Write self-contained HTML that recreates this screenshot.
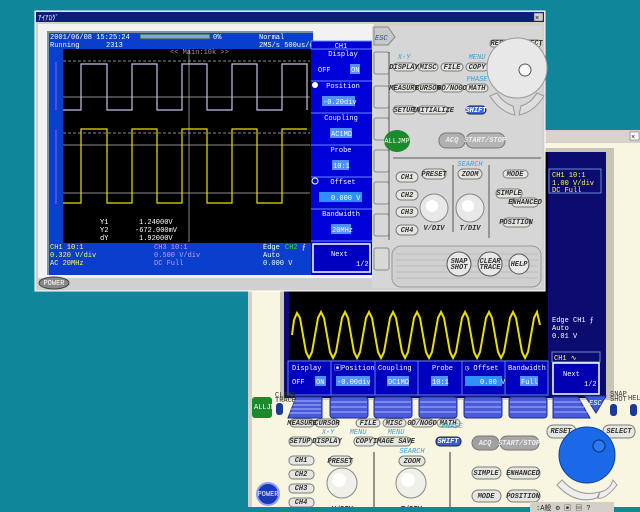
<!DOCTYPE html>
<html><head><meta charset="utf-8"><style>
html,body{margin:0;padding:0;width:640px;height:512px;overflow:hidden;background:#10869a}
svg{display:block}
text{font-family:"Liberation Mono","Noto Sans CJK JP",monospace;font-size:7px}
.b{fill:#e6e6e0;stroke:#7a7a7a;stroke-width:1}
.bt{font-size:4.3px;font-weight:bold;fill:#333;text-anchor:middle;font-style:italic}
.w{fill:#fff}
.mt{fill:#fff;text-anchor:middle;font-size:7px}
</style></head><body>
<svg width="640" height="512" viewBox="0 0 640 512">
<!-- ===== Window 2 (back) ===== -->
<rect x="248" y="130" width="392" height="382" fill="#d4d0c8"/>
<rect x="249" y="131" width="391" height="10" fill="#d8d4cc"/>
<rect x="630" y="132" width="9" height="8" fill="#fff" stroke="#555" stroke-width=".5"/>
<text x="631" y="139" font-size="7">×</text>
<rect x="252" y="143" width="388" height="369" fill="#f8f5e0"/>
<rect x="280" y="148" width="334" height="252" fill="#c8c4b8"/>
<rect x="284" y="152" width="322" height="246" fill="#0c0c70"/>
<rect x="289" y="152" width="259" height="208" fill="#000"/>
<polyline fill="none" stroke="#e8e000" stroke-width="2" points="
292,335 294,320 297,313 300,318 303,335 306,352 309,358 312,352 315,335 318,318 321,312 324,318 327,335 330,352 333,358 336,352 339,335 342,318 345,312 348,318 351,335 354,352 357,358 360,352 363,335 366,318 369,312 372,318 375,335 378,352 381,358 384,352 387,335 390,318 393,312 396,318 399,335 402,352 405,358 408,352 411,335 414,318 417,312 420,318 423,335 426,352 429,358 432,352 435,335 438,318 441,312 444,318 447,335 450,352 453,358 456,352 459,335 462,318 465,312 468,318 471,335 474,352 477,358 480,352 483,335 486,318 489,312 492,318 495,335 498,352 501,358 504,352 507,335 510,318 513,312 516,318 519,335 522,352 525,358 528,352 531,335 534,318 537,312 540,325"/>
<rect x="549" y="169" width="52" height="24" fill="none" stroke="#6a8ad0" stroke-width="1"/>
<text x="552" y="177" fill="#ffff40">CH1 10:1</text>
<text x="552" y="185" fill="#ffff40">1.00 V/div</text>
<text x="552" y="192" fill="#ffff40">DC   Full</text>
<text x="552" y="322" fill="#fff">Edge CH1 ⨍</text>
<text x="552" y="330" fill="#fff">Auto</text>
<text x="552" y="338" fill="#fff">0.01 V</text>
<rect x="552" y="352" width="48" height="10" fill="none" stroke="#6a8ad0"/>
<text x="554" y="360" fill="#ffff40">CH1 ∿</text>
<rect x="553" y="363" width="46" height="31" fill="#0000b0" stroke="#fff" stroke-width="1.5"/>
<text x="563" y="376" fill="#fff">Next</text><text x="584" y="386" fill="#fff">1/2</text>
<!-- menu row -->
<g fill="#0000c0" stroke="#6080e0" stroke-width="1">
<rect x="288" y="361" width="43" height="34"/><rect x="331" y="361" width="44" height="34"/><rect x="375" y="361" width="43" height="34"/>
<rect x="418" y="361" width="44" height="34"/><rect x="462" y="361" width="43" height="34"/><rect x="505" y="361" width="43" height="34"/>
</g>
<g class="w">
<text x="292" y="370">Display</text><text x="334" y="370">▣Position</text><text x="378" y="370">Coupling</text>
<text x="432" y="370">Probe</text><text x="465" y="370">◷ Offset</text><text x="508" y="370">Bandwidth</text>
<text x="292" y="384">OFF</text>
</g>
<rect x="315" y="376" width="11" height="10" fill="#5090ff"/><text x="316" y="384" fill="#fff">ON</text>
<rect x="336" y="376" width="34" height="10" fill="#5090ff"/><text x="337" y="384" fill="#fff">-0.00div</text>
<rect x="387" y="376" width="22" height="10" fill="#5090ff"/><text x="388" y="384" fill="#fff">DC1MΩ</text>
<rect x="431" y="376" width="17" height="10" fill="#5090ff"/><text x="432" y="384" fill="#fff">10:1</text>
<rect x="465" y="376" width="37" height="10" fill="#3090ff"/><text x="480" y="384" fill="#fff">0.00 V</text>
<rect x="520" y="376" width="18" height="10" fill="#5090ff"/><text x="521" y="384" fill="#fff">Full</text>
<!-- blue soft buttons -->
<g fill="#4a5ad8" stroke="#20308a">
<polygon points="296,397 322,397 322,418 288,418"/>
<rect x="330" y="397" width="38" height="21" rx="3"/><rect x="374" y="397" width="38" height="21" rx="3"/>
<rect x="419" y="397" width="38" height="21" rx="3"/><rect x="464" y="397" width="38" height="21" rx="3"/>
<rect x="509" y="397" width="38" height="21" rx="3"/>
<polygon points="553,397 578,397 590,418 553,418"/>
<polygon points="585,396 606,396 596,413" fill="#3a5ad8"/>
</g>
<g stroke="#a8b8ff" stroke-width="1">
<line x1="294" y1="401" x2="321" y2="401"/><line x1="292" y1="405" x2="321" y2="405"/><line x1="290" y1="409" x2="321" y2="409"/><line x1="289" y1="413" x2="321" y2="413"/>
<line x1="331" y1="402" x2="367" y2="402"/><line x1="331" y1="407" x2="367" y2="407"/><line x1="331" y1="412" x2="367" y2="412"/>
<line x1="375" y1="402" x2="411" y2="402"/><line x1="375" y1="407" x2="411" y2="407"/><line x1="375" y1="412" x2="411" y2="412"/>
<line x1="420" y1="402" x2="456" y2="402"/><line x1="420" y1="407" x2="456" y2="407"/><line x1="420" y1="412" x2="456" y2="412"/>
<line x1="465" y1="402" x2="501" y2="402"/><line x1="465" y1="407" x2="501" y2="407"/><line x1="465" y1="412" x2="501" y2="412"/>
<line x1="510" y1="402" x2="546" y2="402"/><line x1="510" y1="407" x2="546" y2="407"/><line x1="510" y1="412" x2="546" y2="412"/>
<line x1="554" y1="402" x2="581" y2="402"/><line x1="554" y1="407" x2="584" y2="407"/><line x1="554" y1="412" x2="587" y2="412"/>
</g>
<text x="589" y="405" fill="#fff" font-size="7" font-style="italic">ESC</text>
<rect x="252" y="397" width="20" height="21" rx="3" fill="#1a8a2a"/><text x="254" y="409" fill="#fff" font-size="3.5">ALLJMP</text>
<text x="275" y="397" font-size="4" fill="#333">CLEAR</text><text x="275" y="402" font-size="4" fill="#333">TRACE</text>
<rect x="276" y="403" width="7" height="12" rx="3" fill="#1a3a9a"/>
<text x="610" y="396" font-size="4" fill="#333">SNAP</text><text x="610" y="401" font-size="4" fill="#333">SHOT</text>
<rect x="610" y="404" width="7" height="12" rx="3" fill="#1a3a9a"/>
<text x="628" y="400" font-size="4" fill="#333">HELP</text>
<rect x="630" y="404" width="7" height="12" rx="3" fill="#1a3a9a"/>
<!-- lower controls -->
<g class="b">
<rect x="290" y="419" width="24" height="8" rx="4"/><rect x="315" y="419" width="24" height="8" rx="4"/>
<rect x="356" y="419" width="24" height="8" rx="4"/><rect x="383" y="419" width="23" height="8" rx="4"/>
<rect x="411" y="419" width="23" height="8" rx="4"/><rect x="437" y="419" width="23" height="8" rx="4"/>
<rect x="289" y="437" width="23" height="9" rx="4"/><rect x="315" y="437" width="25" height="9" rx="4"/>
<rect x="354" y="437" width="21" height="9" rx="4"/><rect x="377" y="437" width="34" height="9" rx="4"/>
<rect x="547" y="425" width="29" height="13" rx="6"/><rect x="603" y="425" width="32" height="13" rx="6"/>
<rect x="289" y="456" width="25" height="9" rx="4"/><rect x="289" y="470" width="25" height="9" rx="4"/>
<rect x="289" y="484" width="25" height="9" rx="4"/><rect x="289" y="498" width="25" height="9" rx="4"/>
<rect x="329" y="456" width="23" height="10" rx="5"/><rect x="399" y="456" width="26" height="10" rx="5"/>
<rect x="472" y="467" width="29" height="12" rx="6"/><rect x="507" y="467" width="33" height="12" rx="6"/>
<rect x="472" y="490" width="29" height="12" rx="6"/><rect x="507" y="490" width="33" height="12" rx="6"/>
</g>
<rect x="472" y="436" width="27" height="14" rx="7" fill="#a0a0a0" stroke="#777"/>
<rect x="500" y="436" width="39" height="14" rx="7" fill="#a8a8a8" stroke="#777"/>
<rect x="436" y="437" width="25" height="9" rx="4" fill="#3a5ad8" stroke="#223"/>
<g class="bt">
<text x="302" y="425">MEASURE</text><text x="327" y="425">CURSOR</text><text x="368" y="425">FILE</text><text x="394" y="425">MISC</text><text x="422" y="425">GO/NOGO</text><text x="448" y="425">MATH</text>
<text x="300" y="443">SETUP</text><text x="327" y="443">DISPLAY</text><text x="364" y="443">COPY</text><text x="394" y="443">IMAGE SAVE</text>
<text x="561" y="433">RESET</text><text x="619" y="433">SELECT</text>
<text x="301" y="462">CH1</text><text x="301" y="476">CH2</text><text x="301" y="490">CH3</text><text x="301" y="504">CH4</text>
<text x="340" y="463">PRESET</text><text x="412" y="463">ZOOM</text>
<text x="486" y="475">SIMPLE</text><text x="523" y="475">ENHANCED</text><text x="486" y="498">MODE</text><text x="523" y="498">POSITION</text>
<text x="485" y="445" fill="#eee">ACQ</text><text x="519" y="445" fill="#eee">START/STOP</text>
<text x="448" y="443" fill="#fff">SHIFT</text>
<text x="342" y="511">V/DIV</text><text x="411" y="511">T/DIV</text>
</g>
<g font-size="5" fill="#3aa0e0" font-style="italic" text-anchor="middle">
<text x="328" y="434">X-Y</text><text x="358" y="434">MENU</text><text x="396" y="434">MENU</text><text x="452" y="428">PHASE</text><text x="412" y="453">SEARCH</text>
</g>
<line x1="374" y1="452" x2="374" y2="508" stroke="#333"/><line x1="450" y1="452" x2="450" y2="508" stroke="#333"/>
<circle cx="342" cy="483" r="15" fill="#f0f0e8" stroke="#888"/><circle cx="339" cy="480" r="7" fill="#fff"/>
<circle cx="411" cy="483" r="15" fill="#f0f0e8" stroke="#888"/><circle cx="408" cy="480" r="7" fill="#fff"/>
<circle cx="587" cy="455" r="28" fill="#1a6ae8" stroke="#1040a0"/><circle cx="599" cy="446" r="6" fill="#2a7af0" stroke="#0a2a70"/>
<path d="M557 485 Q575 505 597 498 L600 492 Q578 498 562 480Z" fill="#eee" stroke="#999"/>
<path d="M617 485 Q605 500 598 498 L600 492 Q610 490 613 480Z" fill="#eee" stroke="#999"/>
<circle cx="268" cy="494" r="11" fill="#1a3ab8" stroke="#8aa0ff" stroke-width="2"/>
<text x="268" y="496" font-size="4" fill="#fff" text-anchor="middle">POWER</text>
<rect x="530" y="502" width="84" height="10" fill="#d4d0c8"/>
<text x="536" y="510" font-size="7" fill="#222">:A般 ⚙ ▣ ▤ ?</text>
<rect x="248" y="507" width="282" height="5" fill="#10869a"/>
<rect x="614" y="507" width="26" height="5" fill="#10869a"/>

<!-- ===== Window 1 (front) ===== -->
<rect x="35" y="11" width="510" height="280" fill="#d4d0c8" stroke="#fff" stroke-width="1"/>
<rect x="36" y="12" width="508" height="10" fill="#0a1e7a"/>
<text x="38" y="20" fill="#fff" font-size="7">ｱｲｱﾛｸﾞ</text>
<rect x="534" y="13" width="9" height="8" fill="#d4d0c8" stroke="#444" stroke-width=".5"/>
<text x="535" y="20" font-size="7">×</text>
<rect x="38" y="24" width="336" height="254" fill="#f2f2f2"/>
<rect x="38" y="278" width="506" height="12" fill="#d0d0d0"/>
<ellipse cx="54" cy="283" rx="15" ry="6" fill="#888" stroke="#444"/><text x="54" y="285" font-size="4" fill="#fff" text-anchor="middle">POWER</text>
<rect x="47" y="31" width="266" height="244" fill="#0a3ecc"/>
<rect x="47" y="31" width="266" height="2" fill="#8090a0"/>
<rect x="47" y="31" width="2" height="244" fill="#8090a0"/>
<text x="50" y="39" fill="#fff">2001/06/08 15:25:24</text>
<text x="50" y="47" fill="#fff">Running</text><text x="106" y="47" fill="#fff">2313</text>
<rect x="140" y="34" width="70" height="5" fill="#8aa0e0" stroke="#1a6a1a"/>
<text x="213" y="39" fill="#fff" font-size="5">0%</text>
<text x="259" y="39" fill="#fff">Normal</text>
<text x="259" y="47" fill="#fff" font-size="6.5">2MS/s 500us/div</text>
<rect x="63" y="49" width="249" height="194" fill="#000"/>
<text x="170" y="54" fill="#999" font-size="4">&lt;&lt; Main:10k &gt;&gt;</text>
<g stroke="#bbb" stroke-width=".7">
<line x1="63" y1="61" x2="310" y2="61" stroke-dasharray="3,2"/><line x1="63" y1="133" x2="310" y2="133" stroke-dasharray="3,2"/>
<line x1="63" y1="97" x2="310" y2="97"/><line x1="63" y1="145" x2="310" y2="145"/><line x1="63" y1="193" x2="310" y2="193"/>
<line x1="189" y1="49" x2="189" y2="242"/>
</g>
<polyline fill="none" stroke="#c8c0e8" stroke-width="1.2" points="63,110 81,110 81,64 107,64 107,110 132,110 132,64 157,64 157,110 182,110 182,64 207,64 207,110 232,110 232,64 257,64 257,110 282,110 282,64 307,64 307,110"/>
<polyline fill="none" stroke="#e8e000" stroke-width="1.2" points="63,203 81,203 81,129 107,129 107,203 132,203 132,129 157,129 157,203 182,203 182,129 207,129 207,203 232,203 232,129 257,129 257,203 282,203 282,129 307,129"/>
<line x1="56" y1="62" x2="56" y2="110" stroke="#8a6ad8" stroke-width="1"/>
<line x1="56" y1="130" x2="56" y2="204" stroke="#8a6ad8" stroke-width="1"/>
<text x="100" y="224" fill="#fff">Y1</text><text x="139" y="224" fill="#fff">1.24000V</text>
<text x="100" y="232" fill="#fff">Y2</text><text x="135" y="232" fill="#fff">-672.000mV</text>
<text x="100" y="240" fill="#fff">dY</text><text x="139" y="240" fill="#fff">1.92000V</text>
<text x="50" y="249" fill="#ffff60">CH1 10:1</text><text x="50" y="257" fill="#ffff60">0.320 V/div</text><text x="50" y="265" fill="#ffff60">AC   20MHz</text>
<text x="154" y="249" fill="#c0a0ff">CH3 10:1</text><text x="154" y="257" fill="#c0a0ff">0.500 V/div</text><text x="154" y="265" fill="#c0a0ff">DC   Full</text>
<text x="263" y="249" fill="#fff">Edge</text><text x="285" y="249" fill="#40e040">CH2</text><text x="302" y="249" fill="#fff">⨍</text>
<text x="263" y="257" fill="#fff">Auto</text><text x="263" y="265" fill="#fff">0.000 V</text>
<!-- right menu -->
<rect x="311" y="41" width="61" height="234" fill="#0000d8"/>
<g stroke="#6a8aff" fill="none"><rect x="311" y="41" width="61" height="8"/>
<line x1="311" y1="81" x2="372" y2="81"/><line x1="311" y1="113" x2="372" y2="113"/><line x1="311" y1="145" x2="372" y2="145"/>
<line x1="311" y1="177" x2="372" y2="177"/><line x1="311" y1="209" x2="372" y2="209"/><line x1="311" y1="241" x2="372" y2="241"/></g>
<text class="mt" x="341" y="48">CH1</text>
<text class="mt" x="343" y="56">Display</text><text x="318" y="72" fill="#fff">OFF</text>
<rect x="350" y="64" width="10" height="10" fill="#5090ff"/><text x="351" y="72" fill="#fff">ON</text>
<circle cx="315" cy="85" r="3" fill="#fff"/><text class="mt" x="343" y="88">Position</text>
<rect x="322" y="96" width="33" height="10" fill="#5090ff"/><text x="323" y="104" fill="#fff">-0.20div</text>
<text class="mt" x="341" y="120">Coupling</text>
<rect x="330" y="128" width="22" height="10" fill="#5090ff"/><text x="331" y="136" fill="#fff">AC1MΩ</text>
<text class="mt" x="341" y="152">Probe</text>
<rect x="332" y="160" width="17" height="10" fill="#5090ff"/><text x="333" y="168" fill="#fff">10:1</text>
<circle cx="315" cy="181" r="3" fill="none" stroke="#fff"/><text class="mt" x="343" y="184">Offset</text>
<rect x="319" y="192" width="43" height="10" fill="#3090ff"/><text x="331" y="200" fill="#fff">0.000 V</text>
<text class="mt" x="341" y="216">Bandwidth</text>
<rect x="331" y="224" width="20" height="10" fill="#5090ff"/><text x="332" y="232" fill="#fff">20MHz</text>
<rect x="313" y="244" width="57" height="28" fill="#0000c0" stroke="#fff" stroke-width="1.5"/>
<text x="331" y="256" fill="#fff">Next</text><text x="356" y="266" fill="#fff">1/2</text>
<!-- grey panel -->
<rect x="372" y="26" width="170" height="262" fill="#d6d6d6"/>
<polygon points="374,27 388,27 395,37 388,45 374,45" fill="#c8c8c8" stroke="#888"/>
<text x="375" y="40" font-size="6.5" fill="#2a4ab0" font-style="italic">ESC</text>
<g fill="#d8d8d8" stroke="#888">
<rect x="374" y="52" width="15" height="22" rx="2"/><rect x="374" y="86" width="15" height="22" rx="2"/><rect x="374" y="118" width="15" height="22" rx="2"/>
<rect x="374" y="150" width="15" height="22" rx="2"/><rect x="374" y="182" width="15" height="22" rx="2"/><rect x="374" y="214" width="15" height="22" rx="2"/>
<rect x="374" y="248" width="15" height="22" rx="2"/>
</g>
<line x1="389" y1="52" x2="389" y2="240" stroke="#555"/>
<line x1="393" y1="158" x2="541" y2="158" stroke="#555"/>
<line x1="453" y1="165" x2="453" y2="232" stroke="#555"/><line x1="489" y1="165" x2="489" y2="238" stroke="#555"/>
<g class="b" fill="#d8d8d8">
<rect x="393" y="63" width="23" height="8" rx="4"/><rect x="418" y="63" width="20" height="8" rx="4"/><rect x="441" y="63" width="22" height="8" rx="4"/><rect x="466" y="63" width="22" height="8" rx="4"/>
<rect x="393" y="84" width="23" height="8" rx="4"/><rect x="418" y="84" width="20" height="8" rx="4"/><rect x="441" y="84" width="22" height="8" rx="4"/><rect x="466" y="84" width="22" height="8" rx="4"/>
<rect x="393" y="106" width="23" height="8" rx="4"/><rect x="418" y="106" width="30" height="8" rx="4"/>
<rect x="490" y="40" width="22" height="7" rx="3"/><rect x="520" y="40" width="21" height="7" rx="3"/>
<rect x="396" y="172" width="22" height="10" rx="5"/><rect x="396" y="190" width="22" height="10" rx="5"/><rect x="396" y="207" width="22" height="10" rx="5"/><rect x="396" y="225" width="22" height="10" rx="5"/>
<rect x="422" y="169" width="24" height="10" rx="5"/><rect x="458" y="169" width="24" height="10" rx="5"/>
<rect x="503" y="170" width="25" height="8" rx="4"/><rect x="496" y="189" width="26" height="9" rx="4"/><rect x="512" y="198" width="26" height="9" rx="4"/><rect x="503" y="218" width="27" height="9" rx="4"/>
</g>
<rect x="466" y="106" width="20" height="8" rx="4" fill="#3a6ae0" stroke="#223"/>
<rect x="439" y="133" width="26" height="15" rx="7" fill="#b0b0b0" stroke="#777"/><rect x="466" y="133" width="39" height="15" rx="7" fill="#b4b4b4" stroke="#777"/>
<ellipse cx="397" cy="141" rx="13" ry="11" fill="#1a8a2a"/><text x="397" y="143" font-size="3.5" fill="#fff" text-anchor="middle">ALLJMP</text>
<g class="bt">
<text x="404" y="69">DISPLAY</text><text x="428" y="69">MISC</text><text x="452" y="69">FILE</text><text x="477" y="69">COPY</text>
<text x="404" y="90">MEASURE</text><text x="428" y="90">CURSOR</text><text x="452" y="90">GO/NOGO</text><text x="477" y="90">MATH</text>
<text x="404" y="112">SETUP</text><text x="433" y="112">INITIALIZE</text><text x="476" y="112" fill="#fff">SHIFT</text>
<text x="501" y="45">RESET</text><text x="530" y="45">SELECT</text>
<text x="452" y="142" fill="#eee">ACQ</text><text x="485" y="142" fill="#eee">START/STOP</text>
<text x="407" y="179">CH1</text><text x="407" y="197">CH2</text><text x="407" y="214">CH3</text><text x="407" y="232">CH4</text>
<text x="434" y="176">PRESET</text><text x="470" y="176">ZOOM</text>
<text x="515" y="176">MODE</text><text x="509" y="195">SIMPLE</text><text x="525" y="204">ENHANCED</text><text x="516" y="224">POSITION</text>
<text x="434" y="230">V/DIV</text><text x="470" y="230">T/DIV</text>
</g>
<g font-size="5" fill="#3aa0e0" font-style="italic" text-anchor="middle">
<text x="404" y="59">X-Y</text><text x="477" y="59">MENU</text><text x="477" y="81">PHASE</text><text x="470" y="166">SEARCH</text>
</g>
<circle cx="517" cy="68" r="30" fill="#e8e8e8" stroke="#999"/><circle cx="525" cy="70" r="6" fill="#f8f8f8" stroke="#555"/>
<path d="M490 96 Q500 112 515 115 L513 106 Q503 103 497 93Z" fill="#ddd" stroke="#999"/>
<path d="M544 96 Q534 112 519 115 L521 106 Q531 103 537 93Z" fill="#ddd" stroke="#999"/>
<circle cx="434" cy="208" r="14" fill="#e8e8e8" stroke="#888"/><circle cx="432" cy="206" r="6" fill="#fff"/>
<circle cx="470" cy="208" r="14" fill="#e8e8e8" stroke="#888"/><circle cx="468" cy="206" r="6" fill="#fff"/>
<rect x="392" y="246" width="149" height="41" rx="9" fill="#d0d0d0" stroke="#999"/>
<g stroke="#bbb"><line x1="396" y1="254" x2="538" y2="254"/><line x1="396" y1="260" x2="538" y2="260"/><line x1="396" y1="266" x2="538" y2="266"/><line x1="396" y1="272" x2="538" y2="272"/><line x1="396" y1="278" x2="538" y2="278"/></g>
<circle cx="459" cy="264" r="12" fill="#e8e8e8" stroke="#555"/><circle cx="490" cy="264" r="12" fill="#e8e8e8" stroke="#555"/><circle cx="519" cy="264" r="10" fill="#e8e8e8" stroke="#555"/>
<g class="bt"><text x="459" y="263">SNAP</text><text x="459" y="269">SHOT</text><text x="490" y="263">CLEAR</text><text x="490" y="269">TRACE</text><text x="519" y="266">HELP</text></g>
</svg>
</body></html>
